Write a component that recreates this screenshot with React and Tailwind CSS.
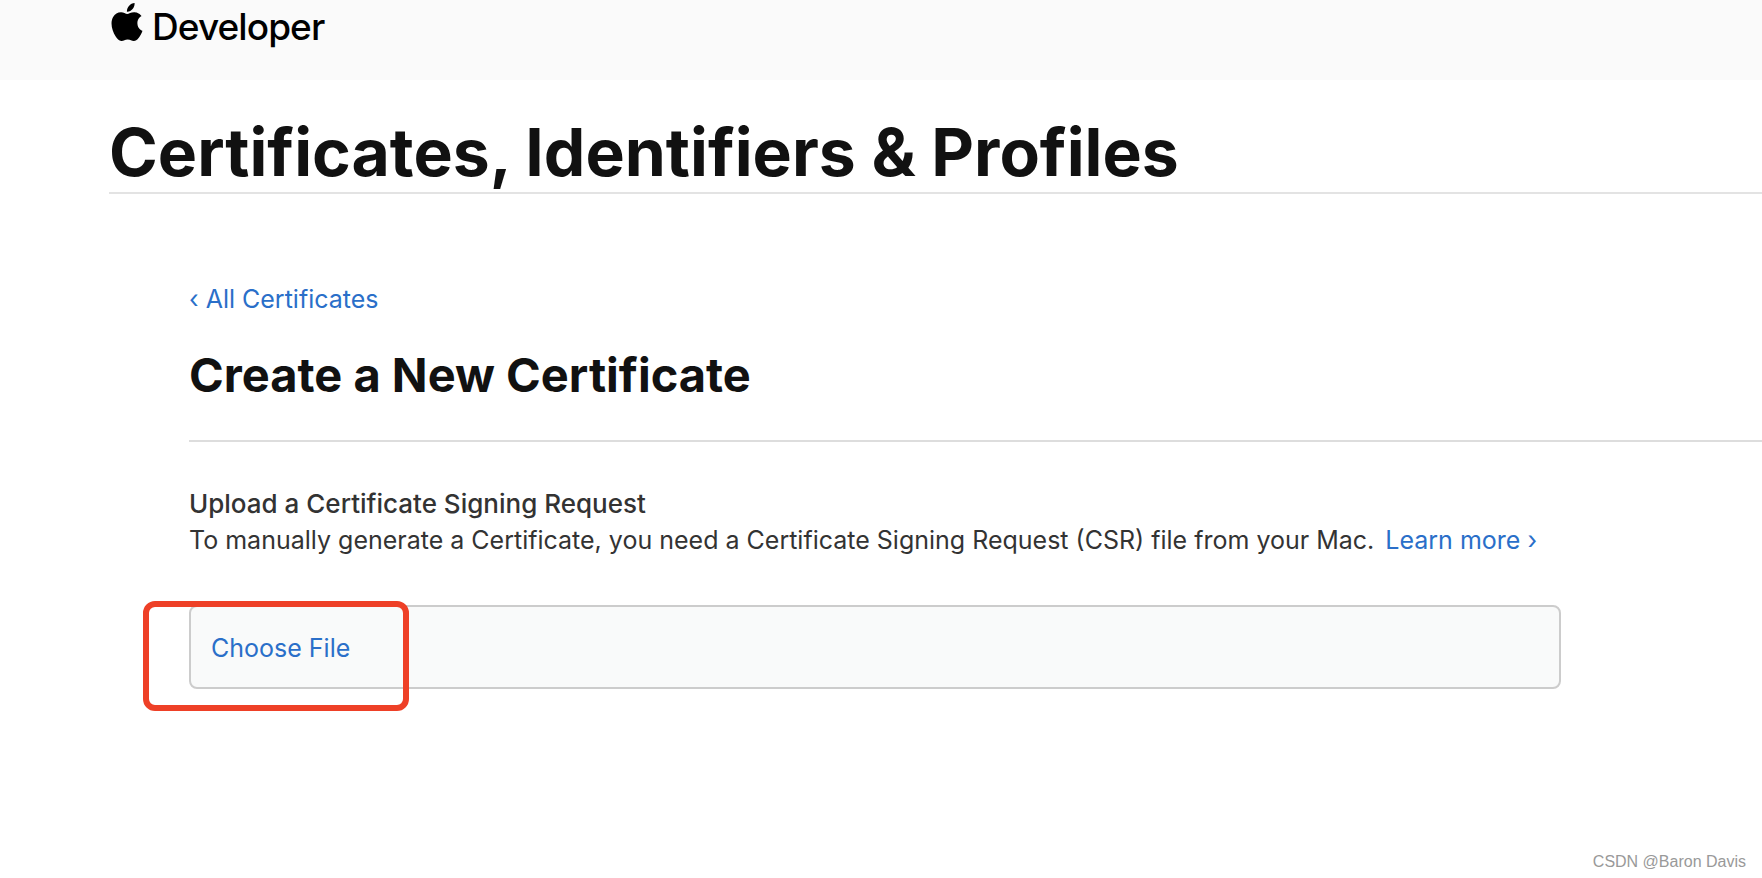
import { useState } from "react";
import { SiApple } from "react-icons/si";

function Header() {
    return (
        <header className="h-20 bg-[#fafafa] pt-[3px] pl-[108px]">
            <a href="#developer" className="flex items-start gap-1.5 text-black">
                <SiApple className="size-[38px]" aria-hidden="true" />
                <span className="text-[37px] leading-[48px] font-medium tracking-tight">Developer</span>
            </a>
        </header>
    );
}

function FilePicker() {
    const [fileName, setFileName] = useState("");

    return (
        <div className="relative mt-[47px] max-w-[1372px]">
            <div className="flex h-[84px] items-center gap-6 rounded-lg border-2 border-[#cccccc] bg-[#f9fafa] px-5 pt-0.5">
                <label htmlFor="csr-file" className="cursor-pointer text-[#2a6fc9]">
                    Choose File
                </label>
                <input
                    id="csr-file"
                    type="file"
                    className="sr-only"
                    onChange={(e) => setFileName(e.target.files?.[0]?.name || "")}
                />
                {fileName && <span>{fileName}</span>}
            </div>
            {/* Highlight around the upload control */}
            <div className="pointer-events-none absolute -top-1 -left-[46px] h-[110px] w-[266px] rounded-xl border-6 border-[#ee4027]" />
        </div>
    );
}

export default function App() {
    return (
        <div className="flex min-h-screen flex-col overflow-x-hidden bg-white font-['Inter',sans-serif] text-[25px] leading-9 text-[#333333]">
            <Header />

            <main className="pl-[109px]">
                <h1 className="border-b-2 border-[#e3e3e3] pt-8 text-[66px] leading-[80px] font-bold text-[#111111]">
                    Certificates, Identifiers &amp; Profiles
                </h1>

                <div className="pt-[87px] pl-20">
                    <a href="#certificates" className="block text-[#2a6fc9]">
                        ‹ All Certificates
                    </a>
                    <h2 className="mt-[28px] border-b-2 border-[#dddddd] pb-[35px] text-[47px] leading-[60px] font-bold text-[#111111]">
                        Create a New Certificate
                    </h2>

                    <h3 className="mt-11 text-[26px] font-medium">Upload a Certificate Signing Request</h3>
                    <p>
                        To manually generate a Certificate, you need a Certificate Signing Request (CSR) file from your Mac.{" "}
                        <a href="#learn-more" className="ml-1 text-[#2a6fc9]">
                            Learn more ›
                        </a>
                    </p>

                    <FilePicker />
                </div>
            </main>

            <footer className="mt-auto px-4 pb-1 text-right font-['Liberation_Sans',sans-serif] text-base leading-6 text-[#999999]">
                CSDN @Baron Davis
            </footer>
        </div>
    );
}
